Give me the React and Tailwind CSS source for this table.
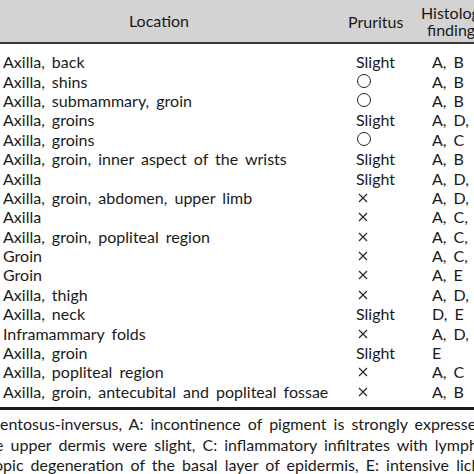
import React from "react";

const rows = [
    ["Axilla, back", "Slight", "A, B"],
    ["Axilla, shins", "o", "A, B"],
    ["Axilla, submammary, groin", "o", "A, B"],
    ["Axilla, groins", "Slight", "A, D,"],
    ["Axilla, groins", "o", "A, C"],
    ["Axilla, groin, inner aspect of the wrists", "Slight", "A, B"],
    ["Axilla", "Slight", "A, D,"],
    ["Axilla, groin, abdomen, upper limb", "x", "A, D,"],
    ["Axilla", "x", "A, C,"],
    ["Axilla, groin, popliteal region", "x", "A, C,"],
    ["Groin", "x", "A, C,"],
    ["Groin", "x", "A, E"],
    ["Axilla, thigh", "x", "A, D,"],
    ["Axilla, neck", "Slight", "D, E"],
    ["Inframammary folds", "x", "A, D,"],
    ["Axilla, groin", "Slight", "E"],
    ["Axilla, popliteal region", "x", "A, C"],
    ["Axilla, groin, antecubital and popliteal fossae", "x", "A, B"],
];

function Pruritus({ value }) {
    if (value === "o") {
        return <span className="inline-block w-[14px] h-[14px] rounded-full border border-[#222] align-[-1px] ml-[1px]" />;
    }
    if (value === "x") {
        return (
            <svg width="10" height="10" viewBox="0 0 10 10" className="ml-[2px] mt-[1px]">
                <path d="M1 1 L9 9 M9 1 L1 9" stroke="#222" strokeWidth="1.1" />
            </svg>
        );
    }
    return <span>{value}</span>;
}

export default function App() {
    return (
        <div className="w-[474px] h-[474px] overflow-hidden bg-white text-[#1a1a1a] font-['Lato',sans-serif] text-[16px] [word-spacing:3px]">
            <div className="w-[520px]">
                <div className="flex h-[44px] bg-[#d3d3d3] border-b-2 border-[#3a3a3a]">
                    <div className="w-[348px] flex items-center justify-center">
                        <span className="-ml-[30px]">Location</span>
                    </div>
                    <div className="w-[73px] flex items-center pt-[2px]">Pruritus</div>
                    <div className="flex-1 flex flex-col justify-center leading-[17px]">
                        <span>Histological</span>
                        <span className="pl-[6px]">findings</span>
                    </div>
                </div>
                <div className="pt-[8px] pb-[6px] border-b-[3px] border-[#1a1a1a]">
                    {rows.map((r, i) => (
                        <div key={i} className="flex h-[19.4px] items-center leading-[19px]">
                            <div className="w-[356px] pl-[3px] whitespace-nowrap">{r[0]}</div>
                            <div className="w-[76px] flex items-center"><Pruritus value={r[1]} /></div>
                            <div className="flex-1 whitespace-nowrap">{r[2]}</div>
                        </div>
                    ))}
                </div>
                <div className="pt-[4px] leading-[20.5px] whitespace-nowrap">
                    <p>entosus-inversus, A: incontinence of pigment is strongly expressed in</p>
                    <p className="-ml-[5px]">e upper dermis were slight, C: inflammatory infiltrates with lymphocytes</p>
                    <p className="-ml-[6px]">opic degeneration of the basal layer of epidermis, E: intensive lichenoid</p>
                </div>
            </div>
        </div>
    );
}
